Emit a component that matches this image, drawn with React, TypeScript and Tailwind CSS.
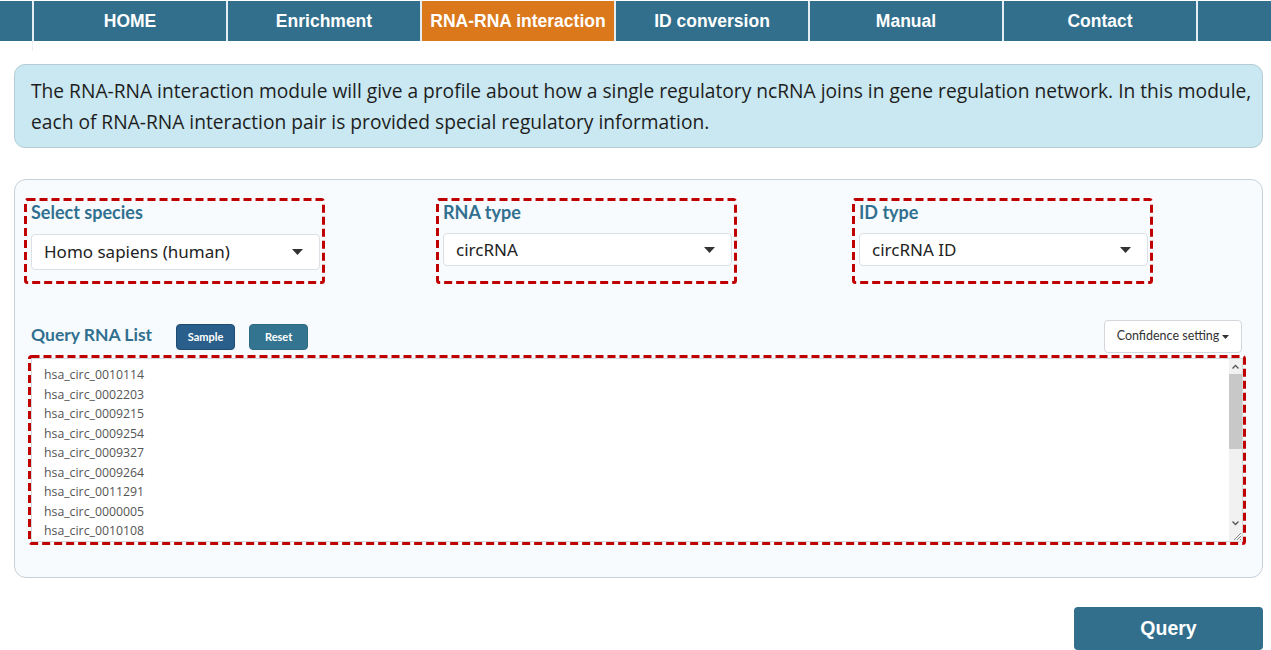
import type { ReactNode } from "react";

const navItems = ["HOME", "Enrichment", "RNA-RNA interaction", "ID conversion", "Manual", "Contact"];

const samples = [
  "hsa_circ_0010114",
  "hsa_circ_0002203",
  "hsa_circ_0009215",
  "hsa_circ_0009254",
  "hsa_circ_0009327",
  "hsa_circ_0009264",
  "hsa_circ_0011291",
  "hsa_circ_0000005",
  "hsa_circ_0010108",
];

// red dashed highlight drawn over a block
const DashedBox = ({ w, h, className, children }: { w: number; h: number; className?: string; children: ReactNode }) => (
  <div className={`relative border-[3px] border-transparent ${className ?? ""}`} style={{ width: w, height: h }}>
    {children}
    <svg width={w} height={h} className="absolute -left-[3px] -top-[3px] pointer-events-none">
      <rect
        x="1.5"
        y="1.5"
        width={w - 3}
        height={h - 3}
        rx="2"
        fill="none"
        stroke="#c00000"
        strokeWidth="3"
        strokeDasharray="8 4"
      />
    </svg>
  </div>
);

const Caret = () => (
  <svg width="11" height="6" viewBox="0 0 11 6" className="shrink-0">
    <path d="M0 0 L11 0 L5.5 6 Z" fill="#333" />
  </svg>
);

const SelectField = ({ label, value, tall }: { label: string; value: string; tall?: boolean }) => (
  <DashedBox w={301} h={86} className="pl-[4px] pr-[2px] flex flex-col">
    <div className="font-['Lato'] font-bold text-[18px] leading-[22px] text-[#31708f]">{label}</div>
    <div
      className={`${tall ? "h-[36px] mt-[11px]" : "h-[33px] mt-[10px]"} bg-white border border-[#dcdfe3] rounded-[4px] flex items-center justify-between pl-[12px] pr-[16px] font-['Noto_Sans'] text-[17px] text-[#222]`}
    >
      <span>{value}</span>
      <Caret />
    </div>
  </DashedBox>
);

export default function App() {
  return (
    <div className="w-[1271px] h-[650px] bg-white overflow-hidden">
      {/* nav */}
      <div className="flex h-[41px] bg-white pt-[1px]">
        <div className="w-[34px] bg-[#316f8d] border-r-2 border-[#e4edf2]" />
        {navItems.map((item) => (
          <div
            key={item}
            className={`w-[194px] flex items-center justify-center border-r-2 border-[#e4edf2] font-['Liberation_Sans'] font-bold text-[17.5px] text-white ${
              item === "RNA-RNA interaction" ? "bg-[#da781b]" : "bg-[#316f8d]"
            }`}
          >
            {item}
          </div>
        ))}
        <div className="flex-1 bg-[#316f8d]" />
      </div>
      <div className="ml-[32px] w-px h-[10px] bg-[#e8eef2]" />

      {/* intro */}
      <div className="ml-[14px] w-[1249px] mt-[13px] h-[84px] bg-[#c9e8f1] border border-[#b6ccd4] rounded-[11px] pl-[16px] pt-[10px] font-['Open_Sans'] text-[19.2px] leading-[31px] text-[#1d1d1d] whitespace-nowrap overflow-hidden">
        The RNA-RNA interaction module will give a profile about how a single regulatory ncRNA joins in gene regulation network. In this module,
        <br />
        each of RNA-RNA interaction pair is provided special regulatory information.
      </div>

      {/* main panel */}
      <div className="ml-[14px] w-[1249px] mt-[31px] h-[399px] bg-[#f7fbfe] border border-[#c6d1d9] rounded-[12px] pt-[18px] px-[9px]">
        <div className="flex">
          <div className="w-[412px]">
            <SelectField label="Select species" value="Homo sapiens (human)" tall />
          </div>
          <div className="w-[416px]">
            <SelectField label="RNA type" value="circRNA" />
          </div>
          <div>
            <SelectField label="ID type" value="circRNA ID" />
          </div>
        </div>

        <div className="flex items-end mt-[36px] pl-[7px] pr-[11px]">
          <div className="font-['Lato'] font-bold text-[17.5px] text-[#31708f] leading-[20px] mb-[8px]">Query RNA List</div>
          <button className="ml-[24px] w-[59px] h-[26px] mb-[3px] rounded-[4px] bg-[#2b5f8b] border border-[#1f4b72] font-['Lato'] font-bold text-[11px] text-white">
            Sample
          </button>
          <button className="ml-[14px] w-[59px] h-[26px] mb-[3px] rounded-[4px] bg-[#337590] border border-[#2d6a84] font-['Lato'] font-bold text-[11px] text-white">
            Reset
          </button>
          <button className="ml-auto w-[138px] h-[33px] rounded-[4px] bg-white border border-[#d3d7db] font-['Lato'] text-[12.5px] text-[#333] flex items-center justify-center gap-[3px]">
            Confidence setting
            <svg width="7" height="4" viewBox="0 0 7 4">
              <path d="M0 0 L7 0 L3.5 4 Z" fill="#333" />
            </svg>
          </button>
        </div>

        <DashedBox w={1218} h={190} className="ml-[4px] mt-[2px]">
          <div className="h-full bg-white border border-[#d6d9dc] flex">
            <div className="flex-1 pl-[12px] pt-[6px] font-['Open_Sans'] text-[12.3px] leading-[19.5px] text-[#555]">
              {samples.map((s) => (
                <div key={s}>{s}</div>
              ))}
            </div>
            <div className="w-[13px] bg-[#f1f1f1] flex flex-col items-center relative">
              <svg width="9" height="10" viewBox="0 0 9 10" className="mt-[3px]">
                <path d="M1.5 6.5 L4.5 3.5 L7.5 6.5" stroke="#555" strokeWidth="1.3" fill="none" />
              </svg>
              <div className="w-[13px] h-[75px] bg-[#c8c8c8] mt-[2px]" />
              <div className="flex-1" />
              <svg width="9" height="10" viewBox="0 0 9 10" className="mb-[13px]">
                <path d="M1.5 3.5 L4.5 6.5 L7.5 3.5" stroke="#555" strokeWidth="1.3" fill="none" />
              </svg>
              <svg width="11" height="11" viewBox="0 0 11 11" className="absolute right-0 bottom-0">
                <path d="M10 3 L3 10 M10 6 L6 10 M10 9 L9 10" stroke="#888" strokeWidth="1" />
              </svg>
            </div>
          </div>
        </DashedBox>
      </div>

      {/* query */}
      <div className="flex justify-end pr-[8px] mt-[29px]">
        <button className="w-[189px] h-[43px] rounded-[4px] bg-[#316f8d] font-['Liberation_Sans'] font-bold text-[19.5px] text-white">
          Query
        </button>
      </div>
    </div>
  );
}
